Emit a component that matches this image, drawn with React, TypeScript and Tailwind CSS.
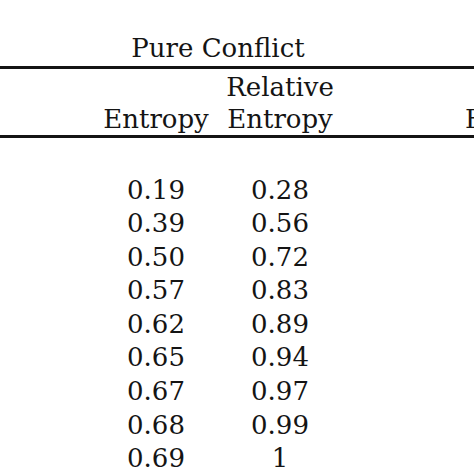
import React from "react";

const rows: [string, string][] = [
  ["0.19", "0.28"],
  ["0.39", "0.56"],
  ["0.50", "0.72"],
  ["0.57", "0.83"],
  ["0.62", "0.89"],
  ["0.65", "0.94"],
  ["0.67", "0.97"],
  ["0.68", "0.99"],
  ["0.69", "1"],
];

export default function App() {
  return (
    <div className="w-[474px] h-[474px] overflow-hidden bg-white text-[#141414] font-['DejaVu_Serif',serif] text-[26px]">
      <div className="pt-[32px] grid grid-cols-[94px_248px_1fr] leading-[33.5px]">
        <div />
        <div className="text-center whitespace-nowrap">Pure Conflict</div>
        <div />
      </div>
      <div className="h-[3px] bg-[#141414]" />
      <div className="mt-[2px] grid grid-cols-[94px_124px_124px_1fr] leading-[32px]">
        <div />
        <div className="pt-[32px] text-center whitespace-nowrap">Entropy</div>
        <div className="text-center whitespace-nowrap">
          <div>Relative</div>
          <div>Entropy</div>
        </div>
        <div className="pt-[32px] pl-[123px] whitespace-nowrap">Entropy</div>
      </div>
      <div className="h-[3px] bg-[#141414]" />
      <div className="mt-[36px] grid grid-cols-[94px_124px_124px_1fr] leading-[33.6px]">
        {rows.map(([a, b]) => (
          <React.Fragment key={a}>
            <div />
            <div className="text-center">{a}</div>
            <div className="text-center">{b}</div>
            <div />
          </React.Fragment>
        ))}
      </div>
    </div>
  );
}
